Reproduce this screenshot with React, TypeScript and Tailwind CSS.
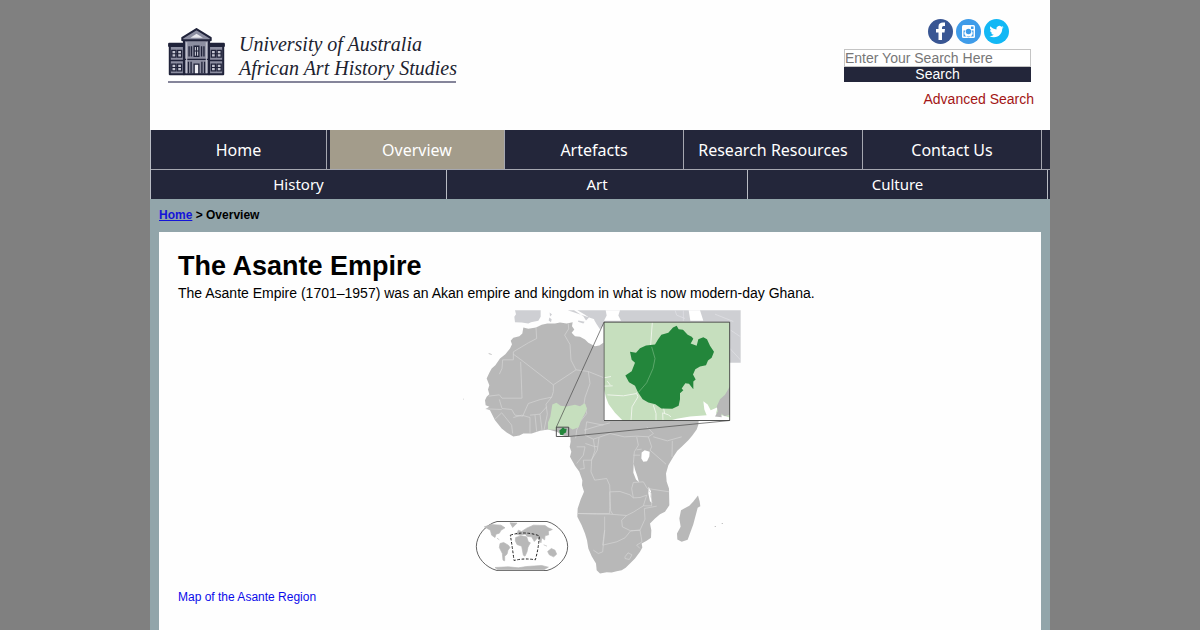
import React from "react";

function Logo() {
  return (
    <a href="#home" className="flex w-72 items-start gap-[14px] border-b-2 border-[#85859a] pb-px text-[#20222f]">
      <svg viewBox="0 0 168 142" className="h-[48px] w-[57px] shrink-0" aria-hidden="true">
        <g fill="#8c8ea1" stroke="#20233a" strokeWidth="6" strokeLinejoin="round">
          <path d="M5 52H47V137H5ZM121 52H163V137H121Z" />
          <path d="M47 34H121V137H47Z" />
          <path d="M42 36V29L84 3L126 29V36Z" />
          <path d="M3 47H45V53H3ZM123 47H165V53H123Z" />
        </g>
        <path d="M66 29L84 17L103 29Z" fill="#e8e8ee" />
        <path d="M6 96H45M123 96H162M47 93H121" stroke="#20233a" strokeWidth="4" />
        <g fill="#c3c4d0" stroke="#20233a" strokeWidth="4">
          <path d="M11 66H23V86H11ZM28 66H40V86H28ZM128 66H140V86H128ZM145 66H157V86H145Z" />
          <path d="M11 107H23V127H11ZM28 107H40V127H28ZM128 107H140V127H128ZM145 107H157V127H145Z" />
          <path d="M77 54H91V84H77Z" />
        </g>
        <path d="M77 107H91V136H77Z" fill="#eeeef3" stroke="#20233a" strokeWidth="4" />
        <path d="M11 76H40M128 76H157M11 117H40M128 117H157M77 68H91M84 54V84" stroke="#20233a" strokeWidth="3" />
        <path d="M62 54V84M69 54V84M99 54V84M106 54V84M60 100V134M68 100V134M100 100V134M108 100V134" stroke="#20233a" strokeWidth="4" />
        <path d="M55 42V134M113 42V134" stroke="#c9cad5" strokeWidth="3" />
      </svg>
      <span className="whitespace-nowrap pt-1 font-['Liberation_Serif',serif] text-[20px] leading-6 italic">
        University of Australia
        <br />
        African Art History Studies
      </span>
    </a>
  );
}

function Socials() {
  return (
    <div className="flex gap-[3px] pr-[25px]">
      <a href="#facebook" aria-label="Facebook">
        <svg viewBox="0 0 50 50" className="size-[25px]">
          <circle cx="25" cy="25" r="25" fill="#395693" />
          <path d="M21 42V27H16V20H21V15C21 9 25 7 30 7H34V14H31Q28 14 28 17V20H34L33 27H28V42Z" fill="#fff" />
        </svg>
      </a>
      <a href="#instagram" aria-label="Instagram">
        <svg viewBox="0 0 50 50" className="size-[25px]">
          <circle cx="25" cy="25" r="25" fill="#3f9ce9" />
          <rect x="12" y="12" width="26" height="26" rx="3" fill="#fff" />
          <path d="M15 23H19A8 8 0 1 0 31 23H35V35H15Z" fill="#3f9ce9" />
          <circle cx="25" cy="25" r="5.5" fill="#3f9ce9" />
          <rect x="30" y="15" width="5" height="5" fill="#3f9ce9" />
        </svg>
      </a>
      <a href="#twitter" aria-label="Twitter">
        <svg viewBox="0 0 50 50" className="size-[25px]">
          <circle cx="25" cy="25" r="25" fill="#12b8f5" />
          <path
            transform="translate(11 11) scale(1.18)"
            d="M23.95 4.57a10 10 0 0 1-2.82.78 4.96 4.96 0 0 0 2.16-2.72c-.95.55-2 .95-3.13 1.19a4.92 4.92 0 0 0-8.38 4.48C7.69 8.1 4.07 6.13 1.64 3.16a4.92 4.92 0 0 0 1.52 6.57 4.9 4.9 0 0 1-2.23-.61v.06a4.92 4.92 0 0 0 3.95 4.83 5 5 0 0 1-2.21.08 4.94 4.94 0 0 0 4.6 3.42A9.87 9.87 0 0 1 0 19.54a14 14 0 0 0 7.55 2.21c9.05 0 14-7.5 14-13.98 0-.21 0-.42-.02-.63a9.94 9.94 0 0 0 2.46-2.55z"
            fill="#fff"
          />
        </svg>
      </a>
    </div>
  );
}

const AFRICA =
  "M190 82L205 86 228 82 245 74 262 70 285 70 300 67 320 70 338 66 336 78 343 88 335 98 345 108 360 110 375 118 385 128 405 138 418 136 430 128V362H716L715 374 710 388 697 406 685 420 665 440 652 452 640 470 625 495 618 520 620 545 627 565 628 615 615 635 600 642 585 655 570 670 574 690 573 713 560 722 545 730 547 742 540 755 525 775 510 790 497 803 485 810 470 813 455 817 440 816 420 820 410 810 408 790 395 768 385 745 381 720 375 700 365 675 352 650 353 625 362 598 372 575 366 555 367 540 358 515 345 497 330 470 334 455 329 440 332 425 331 410 315 408 290 395 265 388 240 392 215 400 190 400 178 406 160 409 140 397 125 385 105 360 90 330 78 326 88 320 77 315 75 300 80 290 88 282 84 268 88 255 80 235 88 218 95 205 106 195 120 175 136 162 150 145 156 132 152 122 160 113 178 108 187 100Z";

const WORLD =
  "M58 50L78 43 108 45 120 53 108 60 103 69 93 72 90 82 80 75 76 60ZM96 84L103 89M105 100L116 97 130 105 135 112 129 120 126 132 119 138 119 152 114 150 112 130 103 112ZM135 38L156 39 143 52ZM152 82L168 77 185 80 190 95 196 98 189 111 186 125 180 138 175 135 170 108 156 103 151 92ZM155 72L160 60 170 64 185 54 205 45 240 46 250 53 262 58 250 63 251 74 240 77 239 89 230 83 228 98 218 83 208 94 200 80 188 79 180 72 165 75ZM248 124L259 115 270 120 275 132 266 140 253 134ZM236 104L246 108M90 172L130 170 160 173 185 169 230 166 250 171 236 179H98Z";

function AfricaMap() {
  return (
    <svg viewBox="0 30 843 800" className="mx-auto block h-[267px] w-[281px]" role="img" aria-label="Map of Africa with the Asante region enlarged">
      <g fill="#cecfd3">
        <path d="M165 30H242V50L235 62 213 66 205 70 185 67 165 66 163 50 168 42Z" />
        <path d="M323 30H342L370 48 378 61 387 52 374 43 352 30H415L430 62V75L420 87 410 72 403 60 398 42 385 30H842V188H808V66H430Z" />
        <path d="M269 37L276 43 270 49ZM268 52L275 57 273 66 266 61ZM355 61L374 65 370 70 354 65Z" />
      </g>
      <path d="M437 30H480L475 46 483 62H432L440 46ZM686 30H720L730 62H691Z" fill="#fff" />
      <path d="M670 30V62M645 30L650 45 675 55M812 90L842 110M810 145L842 180M765 42L820 64" fill="none" stroke="#e3e3e7" strokeWidth="2" />

      <path d={AFRICA} fill="#b8b8b8" />
      <path d="M714 586L719 604 721 618 713 623 700 672 683 719 665 725 652 718 651 700 662 680 658 655 663 630 688 617 700 604Z" fill="#b8b8b8" />
      <path d="M545 457L554 450 569 455 568 469 561 483 550 485 544 475ZM521 490L525 508 532 528 537 546 528 538 520 518ZM566 560L573 573 572 590 577 609 570 603 565 580Z" fill="#fff" />
      <g fill="none" stroke="#d6d6d6" strokeWidth="2" strokeLinejoin="round">
        <path d="M228 82L230 115 205 128 160 155V179H128L126 205 118 222M160 162L190 184 280 254 348 209 333 180 330 133 314 105 326 86 325 70M348 209L385 214 390 250 375 292 372 312M385 214L430 232M182 185L186 294H126L118 284 86 288M280 254V275L275 291 241 298 205 310 188 348 165 345 155 328 126 325 118 298M77 326L125 328M105 357L125 338 135 350 155 375 158 400M160 352L185 345 210 352V398M210 345L240 342 246 390M240 342L260 320M225 345L230 394M275 291L258 312 262 342 252 390" />
        <path d="M375 312L380 340 360 365 350 390 347 414M380 365L430 375M372 390L412 378 450 368M380 365L375 405 400 417 415 412 450 400 493 410 530 408 565 410 580 400 560 380M400 417L405 450 395 480 370 480 373 505 360 507M376 430L400 438 413 440M350 440L375 440 370 465 350 490" />
        <path d="M417 412L412 450 395 478 393 515 404 540 440 535 449 555 450 575 480 574 510 584 520 593 515 565 520 547 550 545 562 565 628 575M530 410L535 435 523 455 520 490M530 449L545 447M520 465H540M565 410L575 440 570 450M570 450L618 492M580 410L622 422 665 410M637 422L636 470M450 575L449 640H353L410 642H450L500 646 520 636 550 617 575 617 574 580 565 570M449 574L452 632 458 642M550 617L560 585 540 592 520 593M500 646L485 660 487 680 512 692 540 690 555 657 553 625 590 618M434 649V690L428 755 415 760 400 750M434 690L428 735 470 725 495 713 512 692 540 690M540 690L546 725 530 735 540 745M495 770L504 758 516 764 508 778 495 775Z" />
      </g>
      <path d="M277 313L289 308 302 317 320 319 345 314 360 318 374 309 381 325 375 340 362 363 356 381 338 388 326 381H289V389L264 388V367L271 350Z" fill="#c6dfbe" />

      <path d="M432 66H809V361H432Z" fill="#c6dfbe" />
      <path d="M432 268L438 292 446 312 465 338 488 361H432ZM630 361L650 356 690 349 740 345 733 328 730 303 743 313 752 330 773 321 768 340 809 352V361Z" fill="#fff" />
      <path d="M809 260L795 284 780 297 770 319 774 333 765 349 785 351 784 340 794 348 809 344Z" fill="#b8b8b8" />
      <g fill="none" stroke="#edf4e9" strokeWidth="3">
        <path d="M432 233L453 229M442 243L451 255M432 258L458 257M442 284L490 287 530 280 534 290 516 320 513 361M580 315L588 340V361M609 361L608 338 625 344 633 350M530 278L562 245 577 200 582 174 572 135 577 66M610 320L614 340" />
      </g>
      <path d="M510 155L528 158 540 144 558 136 585 133 594 118 604 104 625 98 639 82 650 77 656 87 669 89 683 104 695 110 700 116 692 130 710 137 715 117 730 111 741 117 750 137 762 155 755 173 744 181 738 195 720 199 706 207 699 223 707 238 700 244 700 267 687 251 676 249 665 265 670 270 660 279 660 297 656 317 637 326 604 325 586 312 565 307 548 297 533 275 525 257 507 246 496 226 515 213 525 188 515 179Z" fill="#23863b" />
      <path d="M535 277L560 248 579 205 585 175 575 140" fill="none" stroke="#66ad73" strokeWidth="2.5" />
      <path d="M289 381H326V409H289ZM432 66H809V361H432Z" fill="none" stroke="#333" strokeWidth="2.5" />
      <path d="M289 381L432 66M326 409L809 361" fill="none" stroke="#444" strokeWidth="2" />
      <path d="M298 391L303 387 309 381 314 386 320 386 318 397 311 401 310 405 300 404Z" fill="#23863b" />
      <path d="M10 297H12M86 160L95 163M764 679H768M785 670H789" stroke="#c4c4c4" strokeWidth="3" />

      <g transform="translate(15 630)">
        <path d="M96 34H246C280 43 308 77 308 109 308 142 280 172 246 181H96C62 172 34 142 34 109 34 77 62 43 96 34Z" fill="#fff" stroke="#444" strokeWidth="2.5" />
        <path d={WORLD} fill="#b8b8b8" stroke="#b8b8b8" strokeWidth="2" />
        <path d="M136 75Q179 61 223 77Q221 114 211 149Q178 143 147 151Q142 110 136 75Z" fill="none" stroke="#222" strokeWidth="3" strokeDasharray="8 5" />
      </g>
    </svg>
  );
}

const mainLinks = ["Home", "Overview", "Artefacts", "Research Resources", "Contact Us"];
const subLinks = ["History", "Art", "Culture"];

export default function App() {
  return (
    <div className="min-h-screen bg-[#808080] font-['Liberation_Sans',Arial,sans-serif] text-black">
      <div className="mx-auto flex min-h-screen max-w-[900px] flex-col bg-[#92a5aa]">
        <header className="flex h-[130px] items-start justify-between bg-[#fefefe] pl-[18px] pr-4">
          <div className="pt-7">
            <Logo />
          </div>
          <div className="flex flex-col items-end pt-[19px]">
            <Socials />
            <form className="mr-[3px] mt-[5px] flex w-[187px] flex-col text-[14px]" onSubmit={(e) => e.preventDefault()}>
              <input
                type="search"
                aria-label="Search"
                placeholder="Enter Your Search Here"
                className="h-[18px] border border-[#c4c4c4] bg-white leading-4 outline-none placeholder:text-[#777]"
              />
              <button type="submit" className="h-[15px] bg-[#23263a] leading-[15px] text-white">
                Search
              </button>
            </form>
            <a href="#advanced" className="mt-2 text-[14px] leading-[18px] text-[#a31515]">
              Advanced Search
            </a>
          </div>
        </header>

        <nav aria-label="Main" className="border-l border-[#b9bcc4] bg-[#23263a] font-['Trebuchet_MS','Noto_Sans',sans-serif] text-white">
          <ul className="grid h-10 grid-cols-[179fr_175fr_179fr_179fr_179fr_8fr] border-b border-[#a5a7b0] text-[16px] leading-10">
            {mainLinks.map((label) => (
              <li key={label} className={label === "Home" ? "pr-[3px]" : ""}>
                <a
                  href="#nav"
                  className={
                    "block h-[39px] whitespace-nowrap border-r border-[#a5a7b0] text-center " +
                    (label === "Overview" ? "bg-[#a39c8b]" : "")
                  }
                >
                  {label}
                </a>
              </li>
            ))}
          </ul>
          <ul className="grid h-[29px] grid-cols-[296fr_301fr_300fr_2fr] text-[15px] leading-[29px]">
            {subLinks.map((label) => (
              <li key={label}>
                <a href="#sub" className="block border-r border-[#b9bcc4] text-center">
                  {label}
                </a>
              </li>
            ))}
          </ul>
        </nav>

        <p className="px-[9px] pb-2 pt-2 text-[12px] font-bold leading-[17px]">
          <a href="#home" className="text-[#1414d8] underline">
            Home
          </a>{" "}
          &gt; Overview
        </p>

        <main className="mx-[9px] flex-1 bg-[#fefefe] px-[19px] pt-[18px]">
          <h1 className="text-[27px] font-bold leading-8">The Asante Empire</h1>
          <p className="mb-2 mt-[3px] text-[14px] leading-[17px]">
            The Asante Empire (1701–1957) was an Akan empire and kingdom in what is now modern-day Ghana.
          </p>
          <AfricaMap />
          <a href="#map" className="mt-3 inline-block text-[12px] leading-4 text-[#0b0bea]">
            Map of the Asante Region
          </a>
        </main>
      </div>
    </div>
  );
}
